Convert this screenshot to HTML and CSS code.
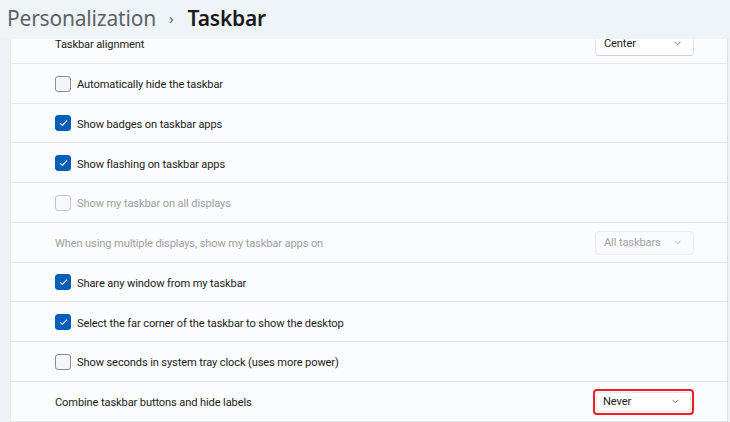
FILE: index.html
```html
<!DOCTYPE html>
<html lang="en">
<head>
<meta charset="utf-8">
<title>Taskbar</title>
<link rel="stylesheet" href="styles.css">
</head>
<body>
<header class="titlebar">
  <span class="crumb">Personalization</span>
  <span class="sep">›</span>
  <span class="current">Taskbar</span>
</header>
<main class="card">
  <div class="row">
    <span class="label">Taskbar alignment</span>
    <div class="select"><span>Center</span><svg class="chev" viewBox="0 0 8 5"><path d="M0.5 0.5 L4 4 L7.5 0.5"/></svg></div>
  </div>
  <div class="row">
    <label class="check"><span class="box"></span><span>Automatically hide the taskbar</span></label>
  </div>
  <div class="row">
    <label class="check"><span class="box on"><svg viewBox="0 0 10 8"><path d="M1 4.2 L3.7 6.8 L9 1.3"/></svg></span><span>Show badges on taskbar apps</span></label>
  </div>
  <div class="row">
    <label class="check"><span class="box on"><svg viewBox="0 0 10 8"><path d="M1 4.2 L3.7 6.8 L9 1.3"/></svg></span><span>Show flashing on taskbar apps</span></label>
  </div>
  <div class="row disabled">
    <label class="check"><span class="box"></span><span>Show my taskbar on all displays</span></label>
  </div>
  <div class="row disabled">
    <span class="label">When using multiple displays, show my taskbar apps on</span>
    <div class="select"><span>All taskbars</span><svg class="chev" viewBox="0 0 8 5"><path d="M0.5 0.5 L4 4 L7.5 0.5"/></svg></div>
  </div>
  <div class="row">
    <label class="check"><span class="box on"><svg viewBox="0 0 10 8"><path d="M1 4.2 L3.7 6.8 L9 1.3"/></svg></span><span>Share any window from my taskbar</span></label>
  </div>
  <div class="row">
    <label class="check"><span class="box on"><svg viewBox="0 0 10 8"><path d="M1 4.2 L3.7 6.8 L9 1.3"/></svg></span><span>Select the far corner of the taskbar to show the desktop</span></label>
  </div>
  <div class="row">
    <label class="check"><span class="box"></span><span>Show seconds in system tray clock (uses more power)</span></label>
  </div>
  <div class="row">
    <span class="label">Combine taskbar buttons and hide labels</span>
    <div class="highlight"><div class="select"><span>Never</span><svg class="chev" viewBox="0 0 8 5"><path d="M0.5 0.5 L4 4 L7.5 0.5"/></svg></div></div>
  </div>
</main>
</body>
</html>
```
FILE: styles.css
```css
* { box-sizing: border-box; }
html, body {
  margin: 0;
  padding: 0;
  width: 730px;
  height: 422px;
  overflow: hidden;
  background: #eef2f7;
  font-family: "Noto Sans", "Open Sans", sans-serif;
  color: #1b1b1b;
}
.titlebar {
  position: fixed;
  top: 0;
  left: 0;
  right: 0;
  height: 39px;
  background: #eff4f9;
  z-index: 2;
  display: flex;
  align-items: center;
  padding: 0 0 3px 7px;
  font-size: 21px;
}
.crumb { color: #5f6266; letter-spacing: -0.2px; }
.sep { color: #5f6266; font-size: 15px; margin: 0 14px 0 13px; }
.current { font-weight: 600; color: #1a1a1a; letter-spacing: -0.2px; }
.card {
  margin: 24px 0 0 10px;
  width: 718px;
  background: #fbfcfd;
  border-left: 1px solid #e8ecf0;
  border-right: 1px solid #dfe3e8;
}
.row {
  height: 39.75px;
  border-bottom: 1px solid #e6e9ec;
  display: flex;
  align-items: center;
  justify-content: space-between;
  padding: 3px 33px 0 44px;
  font-family: Roboto, "Noto Sans", sans-serif;
  font-size: 11.1px;
  letter-spacing: -0.12px;
}
.label { white-space: nowrap; }
.check { display: flex; align-items: center; gap: 6px; }
.box {
  width: 16px;
  height: 16px;
  border-radius: 3px;
  border: 1px solid #8b8d90;
  background: #f4f5f6;
  display: flex;
  align-items: center;
  justify-content: center;
  margin-top: -2px;
}
.box.on { background: #005fb8; border-color: #005fb8; }
.box svg { width: 9px; height: 8px; fill: none; stroke: #fff; stroke-width: 1.3; }
.select {
  width: 99px;
  height: 24px;
  background: #fefefe;
  border: 1px solid #e3e5e8;
  border-bottom-color: #cfd2d6;
  border-radius: 4px;
  display: flex;
  align-items: center;
  justify-content: space-between;
  padding: 0 12px 0 8px;
  margin-top: -2px;
}
.chev { width: 7px; height: 5px; fill: none; stroke: #5b5e62; stroke-width: 0.9; }
.disabled { color: #9d9ea0; }
.disabled .box { border-color: #c4c6c8; background: #f8f9fa; }
.disabled .select { background: #fafbfc; border-color: #eceef0; color: #a3a4a6; }
.disabled .chev { stroke: #b0b2b4; }
.highlight {
  border: 2px solid #ee1c25;
  border-radius: 4px;
  padding: 1px;
  margin-top: -2px;
}
.highlight .select { width: 95px; height: 20px; border-color: #e8eaed; padding-left: 6px; padding-right: 11px; margin-top: 0; }
```
